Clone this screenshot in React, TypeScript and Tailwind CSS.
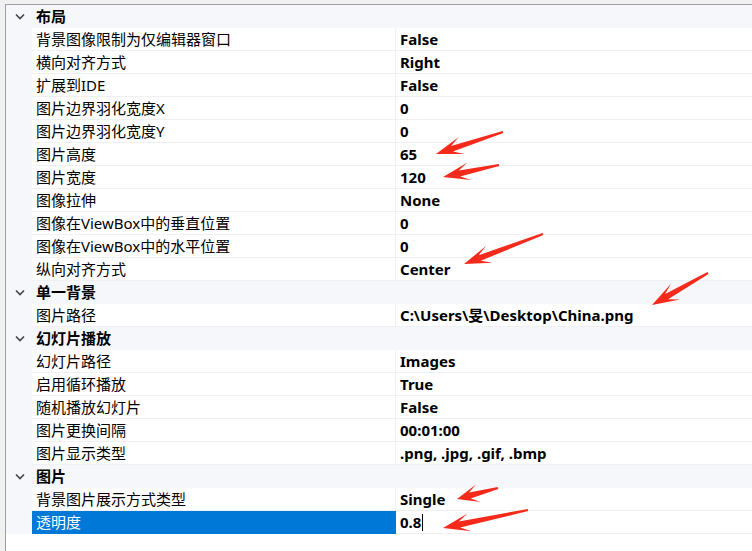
import React from "react";

type Row = { label: string; value: string; selected?: boolean };
type Group = { title: string; rows: Row[] };

const groups: Group[] = [
  {
    title: "布局",
    rows: [
      { label: "背景图像限制为仅编辑器窗口", value: "False" },
      { label: "横向对齐方式", value: "Right" },
      { label: "扩展到IDE", value: "False" },
      { label: "图片边界羽化宽度X", value: "0" },
      { label: "图片边界羽化宽度Y", value: "0" },
      { label: "图片高度", value: "65" },
      { label: "图片宽度", value: "120" },
      { label: "图像拉伸", value: "None" },
      { label: "图像在ViewBox中的垂直位置", value: "0" },
      { label: "图像在ViewBox中的水平位置", value: "0" },
      { label: "纵向对齐方式", value: "Center" },
    ],
  },
  {
    title: "单一背景",
    rows: [{ label: "图片路径", value: "C:\\Users\\旻\\Desktop\\China.png" }],
  },
  {
    title: "幻灯片播放",
    rows: [
      { label: "幻灯片路径", value: "Images" },
      { label: "启用循环播放", value: "True" },
      { label: "随机播放幻灯片", value: "False" },
      { label: "图片更换间隔", value: "00:01:00" },
      { label: "图片显示类型", value: ".png, .jpg, .gif, .bmp" },
    ],
  },
  {
    title: "图片",
    rows: [
      { label: "背景图片展示方式类型", value: "Single" },
      { label: "透明度", value: "0.8", selected: true },
    ],
  },
];

// tail -> tip
const arrows: [number, number, number, number][] = [
  [503, 132, 436, 154],
  [499, 165, 443, 177],
  [543, 234, 464, 264],
  [708, 273, 652, 305],
  [498, 488, 457, 499],
  [528, 510, 443, 528],
];

function arrowPoints(tx: number, ty: number, px: number, py: number) {
  const len = Math.hypot(px - tx, py - ty);
  const dx = (px - tx) / len;
  const dy = (py - ty) / len;
  const nx = -dy;
  const ny = dx;
  const head = Math.min(24, len * 0.45);
  const neck = [px - dx * head * 0.7, py - dy * head * 0.7];
  const barb = [px - dx * (head + 3), py - dy * (head + 3)];
  const pts = [
    [tx + nx * 1, ty + ny * 1],
    [neck[0] + nx * 3, neck[1] + ny * 3],
    [barb[0] + nx * 9, barb[1] + ny * 9],
    [px, py],
    [barb[0] - nx * 9, barb[1] - ny * 9],
    [neck[0] - nx * 3, neck[1] - ny * 3],
    [tx - nx * 1, ty - ny * 1],
  ];
  return pts.map((p) => `${p[0].toFixed(1)},${p[1].toFixed(1)}`).join(" ");
}

function Chevron() {
  return (
    <svg width="10" height="7" viewBox="0 0 10 7" className="block">
      <path d="M1 1.5 L5 5.5 L9 1.5" fill="none" stroke="#444" strokeWidth="1.6" />
    </svg>
  );
}

export default function App() {
  return (
    <div
      className="relative w-[752px] h-[551px] overflow-hidden bg-[#f0f0f0] pt-[4px] pl-[5px] text-[15px] text-black"
      style={{ fontFamily: '"Noto Sans", "Noto Sans CJK SC", sans-serif' }}
    >
      <div className="h-full bg-white border-t border-l border-[#a0a0a0]">
        {groups.map((g) => (
          <div key={g.title}>
            <div className="flex h-[23px] items-center bg-[#f5f7fb]">
              <div className="w-[26px] flex justify-center pl-[2px]">
                <Chevron />
              </div>
              <span className="pl-[4px] font-bold leading-none">{g.title}</span>
            </div>
            {g.rows.map((r) => (
              <div key={r.label} className="flex h-[23px]">
                <div className="w-[26px] bg-[#f5f7fb]" />
                <div
                  className={
                    r.selected
                      ? "w-[364px] flex items-center pl-[4px] bg-[#0078d7] text-white"
                      : "w-[364px] flex items-center pl-[4px] border-b border-r border-[#eef0f3]"
                  }
                >
                  <span className="leading-none whitespace-nowrap">{r.label}</span>
                </div>
                <div className="flex-1 flex items-center pl-[4px] border-b border-[#eef0f3] font-bold">
                  <span className="leading-none whitespace-nowrap">{r.value}</span>
                  {r.selected && <span className="ml-[1px] w-px h-[17px] bg-black" />}
                </div>
              </div>
            ))}
          </div>
        ))}
      </div>
      <svg className="absolute inset-0 pointer-events-none" width="752" height="551">
        {arrows.map((a, i) => (
          <polygon key={i} points={arrowPoints(a[0], a[1], a[2], a[3])} fill="#f52a1b" />
        ))}
      </svg>
    </div>
  );
}
